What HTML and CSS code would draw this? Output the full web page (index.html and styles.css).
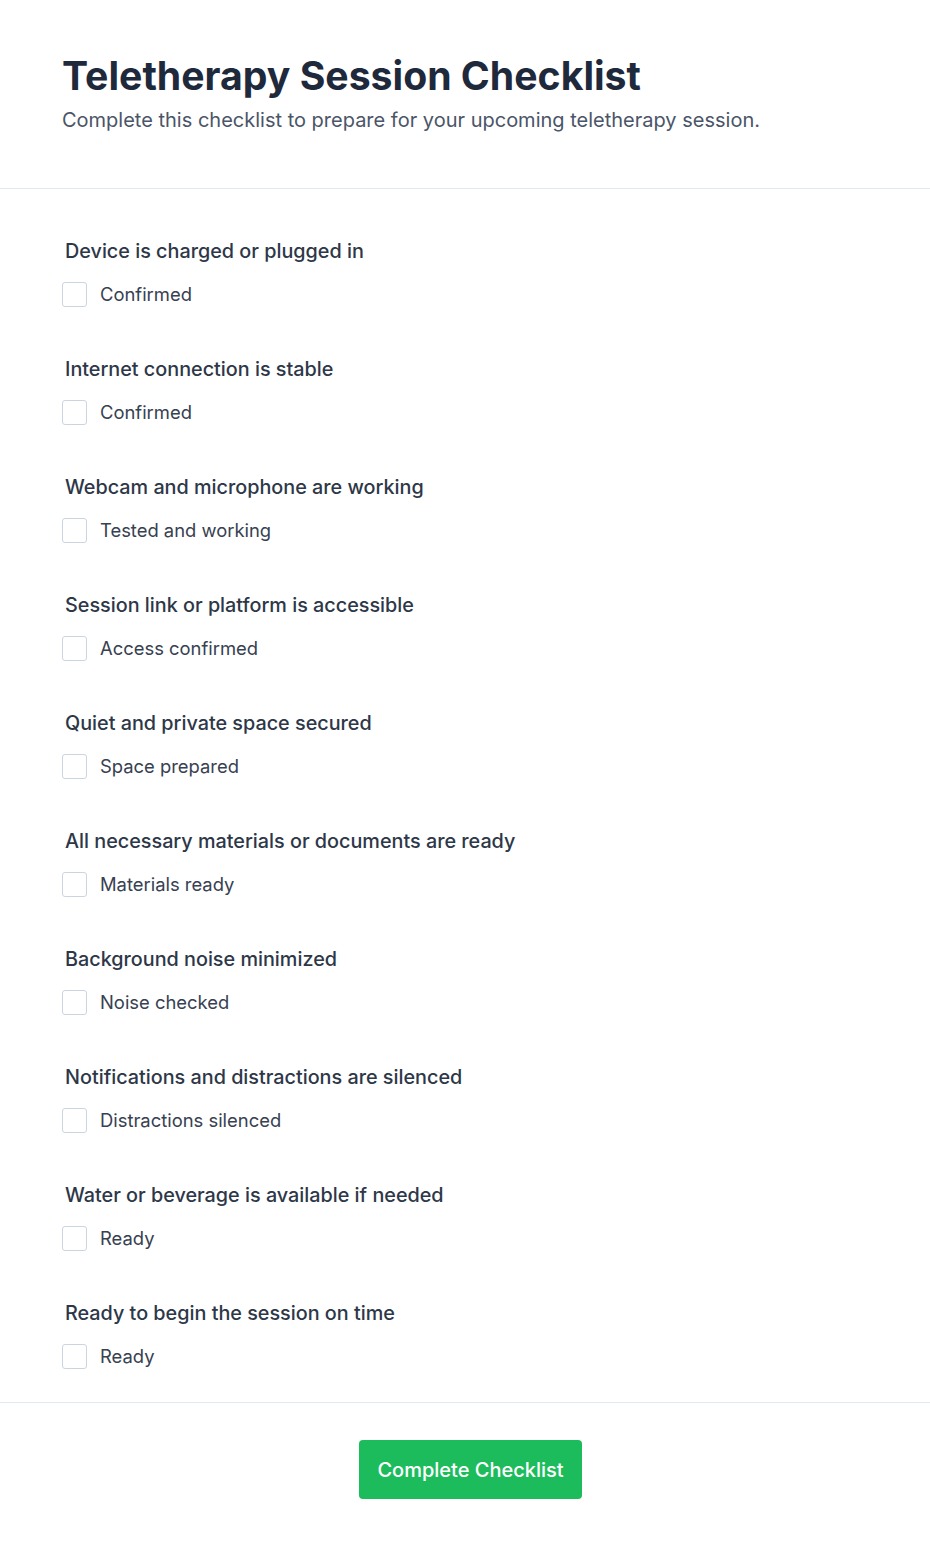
FILE: index.html
```html
<!DOCTYPE html>
<html lang="en">
<head>
<meta charset="utf-8">
<title>Teletherapy Session Checklist</title>
<link rel="stylesheet" href="styles.css">
</head>
<body>
<div class="card">
  <header class="header">
    <h1 class="title">Teletherapy Session Checklist</h1>
    <p class="subtitle">Complete this checklist to prepare for your upcoming teletherapy session.</p>
  </header>
  <main class="list">
    <div class="item">
      <div class="item-label">Device is charged or plugged in</div>
      <label class="check"><span class="box"></span><span>Confirmed</span></label>
    </div>
    <div class="item">
      <div class="item-label">Internet connection is stable</div>
      <label class="check"><span class="box"></span><span>Confirmed</span></label>
    </div>
    <div class="item">
      <div class="item-label">Webcam and microphone are working</div>
      <label class="check"><span class="box"></span><span>Tested and working</span></label>
    </div>
    <div class="item">
      <div class="item-label">Session link or platform is accessible</div>
      <label class="check"><span class="box"></span><span>Access confirmed</span></label>
    </div>
    <div class="item">
      <div class="item-label">Quiet and private space secured</div>
      <label class="check"><span class="box"></span><span>Space prepared</span></label>
    </div>
    <div class="item">
      <div class="item-label">All necessary materials or documents are ready</div>
      <label class="check"><span class="box"></span><span>Materials ready</span></label>
    </div>
    <div class="item">
      <div class="item-label">Background noise minimized</div>
      <label class="check"><span class="box"></span><span>Noise checked</span></label>
    </div>
    <div class="item">
      <div class="item-label">Notifications and distractions are silenced</div>
      <label class="check"><span class="box"></span><span>Distractions silenced</span></label>
    </div>
    <div class="item">
      <div class="item-label">Water or beverage is available if needed</div>
      <label class="check"><span class="box"></span><span>Ready</span></label>
    </div>
    <div class="item">
      <div class="item-label">Ready to begin the session on time</div>
      <label class="check"><span class="box"></span><span>Ready</span></label>
    </div>
  </main>
  <footer class="footer">
    <button class="btn" type="button">Complete Checklist</button>
  </footer>
</div>
</body>
</html>
```

FILE: styles.css
```css
* { box-sizing: border-box; }
html, body { margin: 0; padding: 0; background: #ffffff; }
body {
  font-family: Inter, "Noto Sans", "Liberation Sans", sans-serif;
  color: #2d3748;
}
.card { width: 930px; }
.header {
  padding: 52px 64px 54px 62px;
  border-bottom: 1px solid #e2e8f0;
}
.title {
  margin: 0;
  font-size: 39.2px;
  line-height: 48px;
  font-weight: 700;
  color: #1e293b;
}
.subtitle {
  margin: 6px 0 0;
  font-size: 20px;
  line-height: 28px;
  color: #4a5568;
}
.list {
  padding: 48px 64px 31px 65px;
  display: flex;
  flex-direction: column;
  gap: 46px;
}
.item {
  display: flex;
  flex-direction: column;
  gap: 15px;
}
.item-label {
  font-size: 19.8px;
  line-height: 28px;
  font-weight: 500;
  color: #2d3748;
}
.check {
  display: flex;
  align-items: center;
  gap: 13px;
  font-size: 18.4px;
  line-height: 29px;
  color: #374151;
  margin-left: -3px;
}
.box {
  width: 25px;
  height: 25px;
  border: 1.5px solid #cbd5e0;
  border-radius: 3px;
  background: #fff;
  flex: none;
}
.footer {
  border-top: 1px solid #e2e8f0;
  padding: 37px 0 50px 11px;
  display: flex;
  justify-content: center;
}
.btn {
  font-family: inherit;
  font-size: 20px;
  font-weight: 500;
  color: #ffffff;
  background: #1cbc5c;
  border: none;
  border-radius: 4px;
  width: 223px;
  height: 59px;
  padding: 0;
  cursor: pointer;
}
```
